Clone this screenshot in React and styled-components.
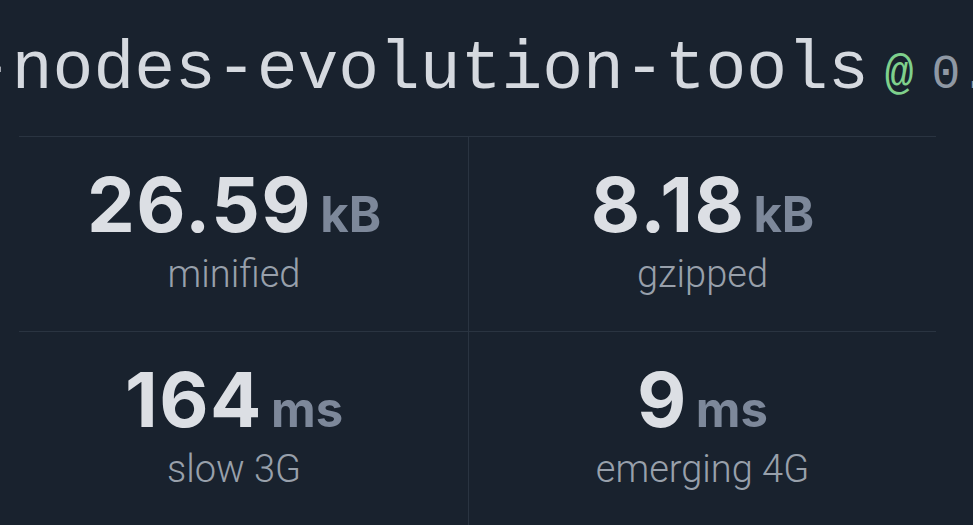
import React from "react";
import styled, { createGlobalStyle } from "styled-components";

const stats = [
  [
    { value: "26.59", unit: "kB", label: "minified" },
    { value: "8.18", unit: "kB", label: "gzipped" },
  ],
  [
    { value: "164", unit: "ms", label: "slow 3G" },
    { value: "9", unit: "ms", label: "emerging 4G" },
  ],
];

const App = () => {
  return (
    <Page>
      <GlobalStyle />
      <Title>
        <Name>-nodes-evolution-tools</Name>
        <Version>
          <At>@</At>
          <span>0.1.0</span>
        </Version>
      </Title>
      <Stats>
        {stats.map((row, i) => (
          <React.Fragment key={i}>
            <Divider />
            <StatRow>
              {row.map((stat) => (
                <Stat key={stat.label}>
                  <Figure>
                    <Value>{stat.value}</Value>
                    <Unit>{stat.unit}</Unit>
                  </Figure>
                  <Label>{stat.label}</Label>
                </Stat>
              ))}
            </StatRow>
          </React.Fragment>
        ))}
      </Stats>
    </Page>
  );
};

export default App;

const GlobalStyle = createGlobalStyle`
  html, body {
    margin: 0;
    padding: 0;
    background: #19222e;
  }
  body {
    font-family: Inter, "Liberation Sans", sans-serif;
    overflow: hidden;
  }
`;

const Page = styled.div`
  width: 973px;
  height: 525px;
  overflow: hidden;
  background: #19222e;
`;

const Title = styled.h1`
  margin: 0;
  padding-top: 36px;
  margin-left: -29px;
  height: 100px;
  box-sizing: border-box;
  white-space: nowrap;
  line-height: 68px;
  font-weight: 400;
  font-family: "Liberation Mono", "DejaVu Sans Mono", monospace;
`;

const Name = styled.span`
  font-size: 68px;
  color: #d5d9df;
`;

const Version = styled.span`
  font-size: 48px;
  color: #8f98a4;
  margin-left: 16px;
`;

const At = styled.span`
  color: #7fd08c;
  margin-right: 18px;
`;

const Stats = styled.div`
  margin-top: 36px;
  width: 936px;
`;

const Divider = styled.div`
  height: 1px;
  margin-left: 19px;
  background: #2a3441;
`;

const StatRow = styled.div`
  display: grid;
  grid-template-columns: 469px 1fr;
  height: 194px;
`;

const Stat = styled.div`
  display: flex;
  flex-direction: column;
  align-items: center;
  padding-top: 29px;
  &:first-child {
    border-right: 1px solid #2a3441;
  }
`;

const Figure = styled.div`
  display: flex;
  align-items: baseline;
  line-height: 76px;
`;

const Value = styled.span`
  font-family: Inter, "Liberation Sans", sans-serif;
  font-weight: 700;
  font-size: 76px;
  letter-spacing: 1.5px;
  color: #dcdfe4;
`;

const Unit = styled.span`
  font-family: Inter, "Liberation Sans", sans-serif;
  font-weight: 700;
  font-size: 49px;
  color: #7d889a;
  margin-left: 8px;
`;

const Label = styled.div`
  margin-top: 2px;
  font-family: Roboto, "Liberation Sans", sans-serif;
  font-weight: 300;
  font-size: 38px;
  line-height: 38px;
  color: #98a0ab;
`;
